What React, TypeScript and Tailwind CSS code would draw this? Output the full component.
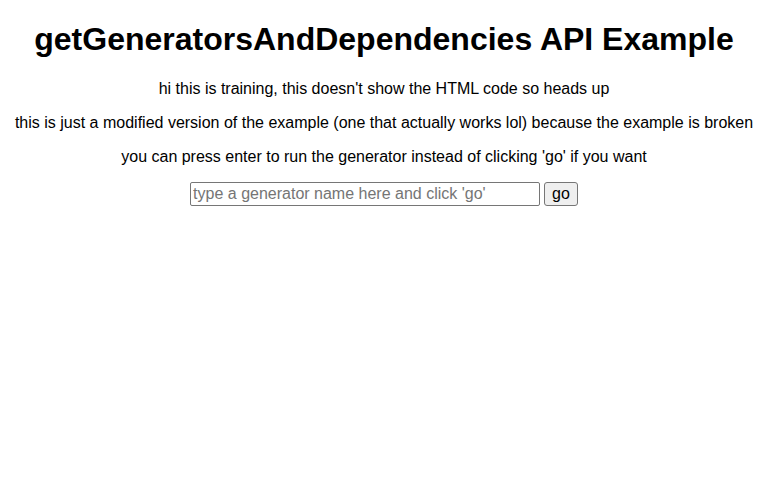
export default function App() {
  return (
    <div className="min-h-[480px] bg-white text-center text-black font-['Liberation_Sans',Arial,sans-serif]">
      <h1 className="pt-[21px] pb-[22px] text-[32px] font-bold leading-[37px]">
        getGeneratorsAndDependencies API Example
      </h1>
      <div className="flex flex-col gap-4 text-base leading-[18px]">
        <p>hi this is training, this doesn't show the HTML code so heads up</p>
        <p>
          this is just a modified version of the example (one that actually works lol) because the example is broken
        </p>
        <p>you can press enter to run the generator instead of clicking 'go' if you want</p>
      </div>
      <div className="mt-4 flex items-center justify-center gap-1">
        <input
          type="text"
          placeholder="type a generator name here and click 'go'"
          className="h-6 w-[350px] rounded-[2px] border border-[#767676] px-[2px] text-base placeholder:text-[#757575] outline-none"
        />
        <button className="h-6 rounded-[3px] border border-[#767676] bg-[#efefef] px-[7px] text-base leading-none">
          go
        </button>
      </div>
    </div>
  );
}
